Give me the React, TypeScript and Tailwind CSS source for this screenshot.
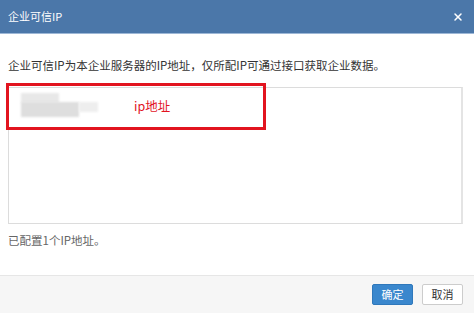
import { X } from 'lucide-react';

export default function App() {
  return (
    <div
      className="w-[474px] h-[313px] bg-white flex flex-col overflow-hidden"
      style={{ fontFamily: '"Microsoft YaHei", "Noto Sans CJK SC", "Noto Sans", sans-serif' }}
    >
      {/* Header */}
      <div className="h-[34px] shrink-0 bg-[#4b77a9] border-b border-[#9db7d6] flex items-center justify-between pl-[8px] pr-[10px]">
        <span className="text-white text-[11px] leading-none">企业可信IP</span>
        <X className="w-[12px] h-[12px] text-white" strokeWidth={3} />
      </div>

      {/* Body */}
      <div className="flex-1 px-[8px] pt-[23px] relative">
        <p className="text-[#333] text-[11.5px] leading-[16px]">
          企业可信IP为本企业服务器的IP地址，仅所配IP可通过接口获取企业数据。
        </p>

        <div className="mt-[14px] mr-[3px] h-[137px] border border-[#dcdcdc] border-r-2 border-r-[#e4e4e4] bg-white relative">
          {/* blurred ip placeholder */}
          <div className="absolute left-[12px] top-[5px] w-[38px] h-[10px] bg-[#e8e8e8] blur-[1px]" />
          <div className="absolute left-[12px] top-[14px] w-[58px] h-[15px] bg-[#dedede] blur-[1px]" />
          <div className="absolute left-[70px] top-[14px] w-[19px] h-[10px] bg-[#eeeeee] blur-[1px]" />
        </div>

        <p className="mt-[9px] text-[#666] text-[11.5px] leading-[14px]">已配置1个IP地址。</p>

        {/* annotation */}
        <div className="absolute left-[6px] top-[49px] w-[260px] h-[47px] border-[3px] border-[#e2141f] flex items-center pl-[125px]">
          <span className="text-[#e2141f] text-[12.5px] leading-none">ip地址</span>
        </div>
      </div>

      {/* Footer */}
      <div className="h-[38px] shrink-0 bg-[#f6f6f6] border-t border-[#e6e6e6] flex items-center justify-end gap-[9px] pr-[11px]">
        <button className="w-[41px] h-[21px] bg-[#3a87cd] border border-[#2f78bb] rounded-[2px] text-white text-[11px] leading-none">
          确定
        </button>
        <button className="w-[41px] h-[21px] bg-white border border-[#cccccc] rounded-[2px] text-[#333] text-[11px] leading-none">
          取消
        </button>
      </div>
    </div>
  );
}
